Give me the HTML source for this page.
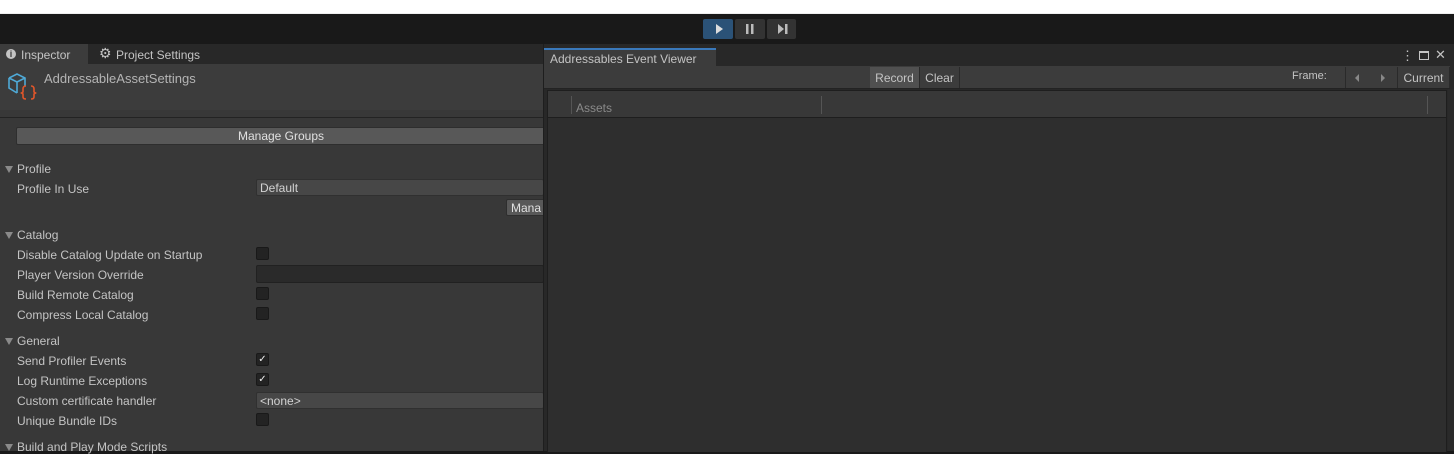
<!DOCTYPE html>
<html><head><meta charset="utf-8"><style>
*{margin:0;padding:0;box-sizing:border-box}
body{width:1454px;height:451px;overflow:hidden;background:#191919;font-family:"Liberation Sans",sans-serif;font-size:12px;color:#c4c4c4;position:relative}
.a{position:absolute}
.lbl{position:absolute;left:17px;font-size:12px;color:#c4c4c4;margin-top:1px}
.hd{position:absolute;left:5px;font-size:12px;color:#c4c4c4;margin-top:1px}
.hd:before{content:"";display:inline-block;width:0;height:0;border-left:4px solid transparent;border-right:4px solid transparent;border-top:7px solid #8a8a8a;margin-right:4px;vertical-align:0}
.cb{position:absolute;left:256px;width:13px;height:13px;background:#232323;border:1px solid #191919;border-radius:2px}
.fld{position:absolute;left:256px;width:288px;height:17px;background:#474747;border:1px solid #303030;border-radius:2px;padding-left:3px;line-height:17px;color:#d2d2d2}
</style></head><body>
<div class="a" style="left:0;top:0;width:1454px;height:13px;background:#fff"></div>
<div class="a" style="left:0;top:13px;width:1454px;height:1px;background:#eee"></div>
<div class="a" style="left:703px;top:19px;width:30px;height:20px;background:#2b5277;border-radius:2px"></div>
<div class="a" style="left:735px;top:19px;width:30px;height:20px;background:#333;border-radius:2px"></div>
<div class="a" style="left:767px;top:19px;width:29px;height:20px;background:#333;border-radius:2px"></div>
<svg class="a" style="left:703px;top:19px" width="93" height="20"><path d="M13 5 L20 10 L13 15Z" fill="#ddd"/><rect x="43" y="5" width="2.5" height="10" fill="#bbb"/><rect x="48" y="5" width="2.5" height="10" fill="#bbb"/><path d="M75 5 L81 10 L75 15Z" fill="#bbb"/><rect x="82" y="5" width="2.5" height="10" fill="#bbb"/></svg>
<div class="a" style="left:0;top:44px;width:544px;height:21px;background:#282828"></div>
<div class="a" style="left:0;top:44px;width:88px;height:21px;background:#3c3c3c"></div>
<div class="a" style="left:6px;top:49px;width:10px;height:10px;border-radius:5px;background:#c4c4c4;color:#3c3c3c;font-size:9px;font-weight:bold;text-align:center;line-height:10px">i</div>
<div class="a" style="left:21px;top:48px;color:#c4c4c4">Inspector</div>
<div class="a" style="left:99px;top:45px;font-size:14px;color:#c4c4c4">⚙</div>
<div class="a" style="left:116px;top:48px;color:#c4c4c4">Project Settings</div>
<div class="a" style="left:0;top:64px;width:544px;height:53px;background:#3c3c3c"></div>
<div class="a" style="left:0;top:110px;width:544px;height:7px;background:#383838"></div>
<div class="a" style="left:0;top:117px;width:544px;height:1px;background:#232323"></div>
<svg class="a" style="left:6px;top:70px" width="32" height="30"><path d="M3 8 L11 4 L19 8 L19 16 M3 8 L11 12 L19 8 M3 8 L3 18 L11 23 M11 12 L11 23" stroke="#4fa9d6" stroke-width="1.6" fill="none"/><path d="M20 16 Q17 16 17 19 L17 22 L15.5 23 L17 24 L17 27 Q17 29 20 29 M25 16 Q28 16 28 19 L28 22 L29.5 23 L28 24 L28 27 Q28 29 25 29" stroke="#e0562a" stroke-width="1.6" fill="none"/></svg>
<div class="a" style="left:44px;top:71px;color:#b4b4b4;font-size:13px">AddressableAssetSettings</div>
<div class="a" style="left:0;top:118px;width:544px;height:333px;background:#383838"></div>
<div class="a" style="left:16px;top:127px;width:530px;height:18px;background:#585858;border:1px solid #2e2e2e;border-radius:2px;text-align:center;line-height:17px;color:#e0e0e0">Manage Groups</div>
<div class="hd" style="top:161px">Profile</div>
<div class="lbl" style="top:181px">Profile In Use</div>
<div class="fld" style="top:179px">Default</div>
<div class="a" style="left:506px;top:199px;width:40px;height:17px;background:#585858;border:1px solid #2e2e2e;border-radius:2px;padding-left:4px;line-height:17px;color:#e0e0e0">Mana</div>
<div class="hd" style="top:227px">Catalog</div>
<div class="lbl" style="top:247px">Disable Catalog Update on Startup</div><div class="cb" style="top:247px"></div>
<div class="lbl" style="top:267px">Player Version Override</div>
<div class="a" style="left:256px;top:265px;width:288px;height:18px;background:#2a2a2a;border:1px solid #212121;border-radius:2px"></div>
<div class="lbl" style="top:287px">Build Remote Catalog</div><div class="cb" style="top:287px"></div>
<div class="lbl" style="top:307px">Compress Local Catalog</div><div class="cb" style="top:307px"></div>
<div class="hd" style="top:333px">General</div>
<div class="lbl" style="top:353px">Send Profiler Events</div><div class="cb" style="top:353px;color:#eee;font-size:10px;text-align:center;line-height:11px">✓</div>
<div class="lbl" style="top:373px">Log Runtime Exceptions</div><div class="cb" style="top:373px;color:#eee;font-size:10px;text-align:center;line-height:11px">✓</div>
<div class="lbl" style="top:393px">Custom certificate handler</div>
<div class="fld" style="top:392px">&lt;none&gt;</div>
<div class="lbl" style="top:413px">Unique Bundle IDs</div><div class="cb" style="top:413px"></div>
<div class="hd" style="top:439px">Build and Play Mode Scripts</div>
<div class="a" style="left:543px;top:44px;width:911px;height:407px;background:#282828;border-left:1px solid #1e1e1e"></div>
<div class="a" style="left:544px;top:48px;width:172px;height:19px;background:#3c3c3c;border-top:2px solid #3a79bb"></div>
<div class="a" style="left:550px;top:52px;color:#c4c4c4">Addressables Event Viewer</div>
<div class="a" style="left:1401px;top:48px;color:#c4c4c4;font-size:13px">⋮</div>
<div class="a" style="left:1419px;top:51px;width:10px;height:9px;border:1px solid #c4c4c4;border-top-width:2px"></div>
<div class="a" style="left:1435px;top:47px;color:#c4c4c4;font-size:13px">✕</div>
<div class="a" style="left:544px;top:66px;width:906px;height:23px;background:#3c3c3c;border-bottom:1px solid #232323"></div>
<div class="a" style="left:870px;top:67px;width:49px;height:21px;background:#505050;text-align:center;line-height:22px;color:#c4c4c4">Record</div>
<div class="a" style="left:919px;top:67px;width:41px;height:21px;border-left:1px solid #2a2a2a;border-right:1px solid #2a2a2a;text-align:center;line-height:22px;color:#c4c4c4">Clear</div>
<div class="a" style="left:1292px;top:70px;font-size:11px;color:#c4c4c4">Frame:</div>
<div class="a" style="left:1345px;top:67px;width:1px;height:21px;background:#2a2a2a"></div>
<div class="a" style="left:1355px;top:74px;width:0;height:0;border-top:4px solid transparent;border-bottom:4px solid transparent;border-right:4px solid #888"></div>
<div class="a" style="left:1381px;top:74px;width:0;height:0;border-top:4px solid transparent;border-bottom:4px solid transparent;border-left:4px solid #888"></div>
<div class="a" style="left:1397px;top:67px;width:53px;height:21px;border-left:1px solid #2a2a2a;border-right:1px solid #2a2a2a;text-align:center;line-height:22px;color:#c4c4c4">Current</div>
<div class="a" style="left:547px;top:90px;width:900px;height:362px;background:#2e2e2e;border:1px solid #1e1e1e;border-bottom:none"></div>
<div class="a" style="left:548px;top:91px;width:898px;height:27px;background:#383838;border-bottom:1px solid #1e1e1e"></div>
<div class="a" style="left:571px;top:96px;width:1px;height:18px;background:#555"></div>
<div class="a" style="left:576px;top:101px;color:#8a8a8a;font-size:12px">Assets</div>
<div class="a" style="left:821px;top:96px;width:1px;height:18px;background:#555"></div>
<div class="a" style="left:1427px;top:96px;width:1px;height:18px;background:#555"></div>
<div class="a" style="left:1448px;top:89px;width:6px;height:362px;background:#2a2a2a"></div>
</body></html>
